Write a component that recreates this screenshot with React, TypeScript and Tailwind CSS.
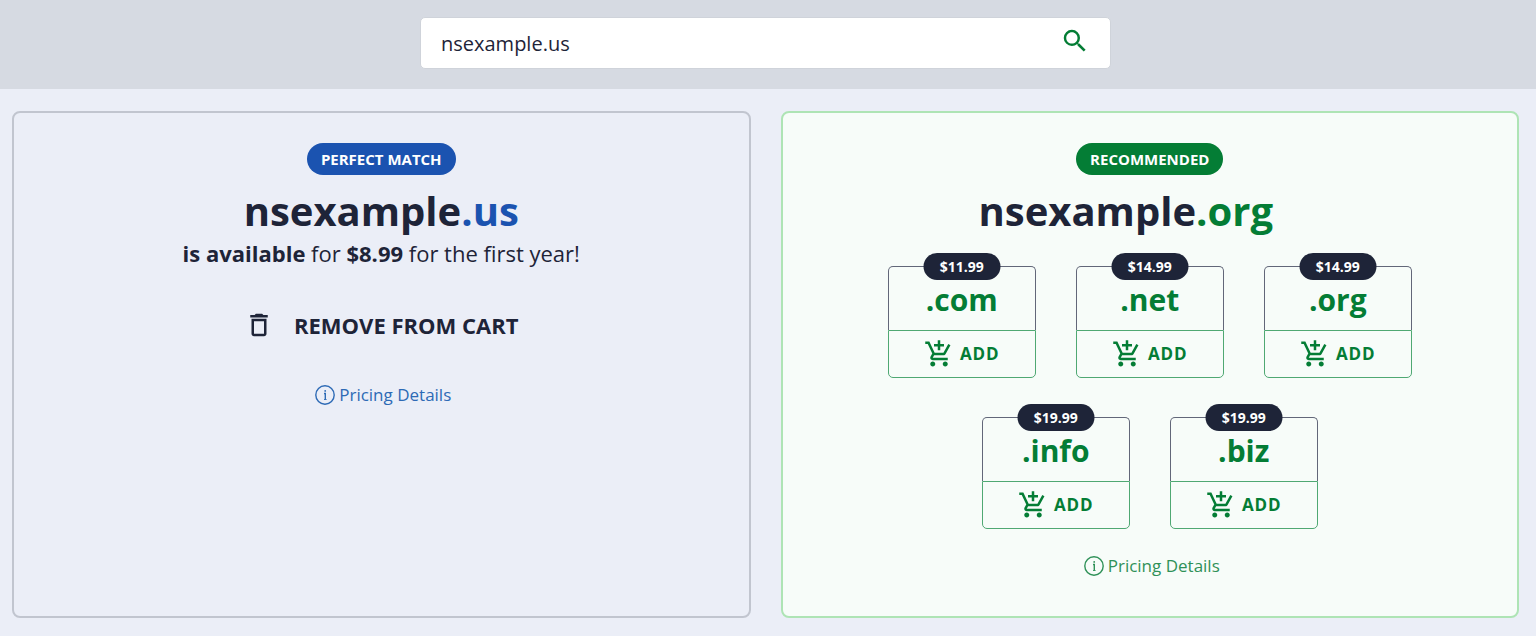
import React, { useState } from 'react';
import { MdDeleteOutline, MdOutlineAddShoppingCart, MdSearch } from 'react-icons/md';

interface Tld {
  name: string;
  price: string;
}

const tlds: Tld[] = [
  { name: '.com', price: '$11.99' },
  { name: '.net', price: '$14.99' },
  { name: '.org', price: '$14.99' },
  { name: '.info', price: '$19.99' },
  { name: '.biz', price: '$19.99' },
];

const InfoIcon: React.FC = () => (
  <svg
    className="size-5"
    viewBox="0 0 20 20"
    fill="none"
    stroke="currentColor"
    strokeWidth="1.4"
    aria-hidden="true"
  >
    <circle cx="10" cy="10" r="9.2" />
    <path d="M9 8.5H10.3V14.6" strokeWidth="1.4" />
    <path d="M9 14.5H11.6" strokeWidth="0.9" />
    <circle cx="10.2" cy="5.9" r="0.9" fill="currentColor" stroke="none" />
  </svg>
);

const PricingLink: React.FC<{ className: string }> = ({ className }) => (
  <a href="#pricing" className={`inline-flex items-center gap-1 pl-1 text-[17px] leading-6 ${className}`}>
    <InfoIcon />
    Pricing Details
  </a>
);

const TldCard: React.FC<{ tld: Tld }> = ({ tld }) => (
  <div className="relative w-[148px]">
    <span className="absolute -top-[13px] left-1/2 flex h-[27px] w-[77px] -translate-x-1/2 items-center justify-center rounded-full bg-[#1e2438] text-sm font-bold text-white">
      {tld.price}
    </span>
    <div className="flex h-16 items-center justify-center rounded-t-[5px] border border-b-0 border-[#626779] pt-0.5 text-3xl font-bold text-[#047d35]">
      {tld.name}
    </div>
    <button
      type="button"
      className="flex h-12 w-full items-center justify-center gap-1.5 rounded-b-[5px] border border-[#4fa873] text-[17px] font-bold tracking-wider text-[#047d35]"
    >
      <MdOutlineAddShoppingCart className="size-[30px]" />
      ADD
    </button>
  </div>
);

const App: React.FC = () => {
  const [query, setQuery] = useState('nsexample.us');

  return (
    <div className="flex min-h-screen flex-col bg-[#ebeef7] font-['Open_Sans',sans-serif] text-[#1e2438]">
      {/* Search Bar */}
      <header className="flex justify-center bg-[#d6dae2] pt-[17px] pr-[21px] pb-5 pl-4">
        <form
          className="flex w-full max-w-[691px] items-center rounded-[5px] border border-[#cfd3da] bg-white px-5"
          onSubmit={(e) => e.preventDefault()}
        >
          <input
            type="text"
            aria-label="Domain name"
            value={query}
            onChange={(e) => setQuery(e.target.value)}
            className="h-[50px] min-w-0 flex-1 bg-transparent pt-px text-xl outline-none"
          />
          <button type="submit" aria-label="Search" className="pb-1 text-[#047d35]">
            <MdSearch className="size-[30px]" />
          </button>
        </form>
      </header>

      {/* Results */}
      <main className="grid flex-1 grid-cols-2 gap-[30px] pt-[22px] pr-[17px] pb-[18px] pl-3">
        {/* Perfect Match */}
        <section className="flex flex-col items-center rounded-lg border-2 border-[#c1c5cf] pt-[30px]">
          <span className="flex h-8 items-center rounded-full bg-[#1b53b0] px-[14px] text-[15px] font-bold text-white">
            PERFECT MATCH
          </span>
          <h2 className="mt-2 text-[40px] leading-[56px] font-bold">
            nsexample<span className="text-[#1b53b0]">.us</span>
          </h2>
          <p className="text-[22px] leading-7">
            <strong>is available</strong> for <strong>$8.99</strong> for the first year!
          </p>
          <button type="button" className="mt-[42px] flex items-center gap-5 text-[22px] leading-8 font-bold">
            <MdDeleteOutline className="size-[30px]" />
            REMOVE FROM CART
          </button>
          <PricingLink className="mt-[42px] text-[#2d6ab5]" />
        </section>

        {/* Recommended */}
        <section className="flex flex-col items-center rounded-lg border-2 border-[#aee4b5] bg-[#f7fcf9] pt-[30px]">
          <span className="flex h-8 items-center rounded-full bg-[#047d35] px-[14px] text-[15px] font-bold text-white">
            RECOMMENDED
          </span>
          <h2 className="mt-2 pr-12 text-[40px] leading-[56px] font-bold">
            nsexample<span className="text-[#047d35]">.org</span>
          </h2>
          <div className="mt-[27px] flex max-w-[540px] flex-wrap justify-center gap-x-10 gap-y-[39px]">
            {tlds.map((tld) => (
              <TldCard key={tld.name} tld={tld} />
            ))}
          </div>
          <PricingLink className="mt-[25px] text-[#2f9158]" />
        </section>
      </main>
    </div>
  );
};

export default App;
